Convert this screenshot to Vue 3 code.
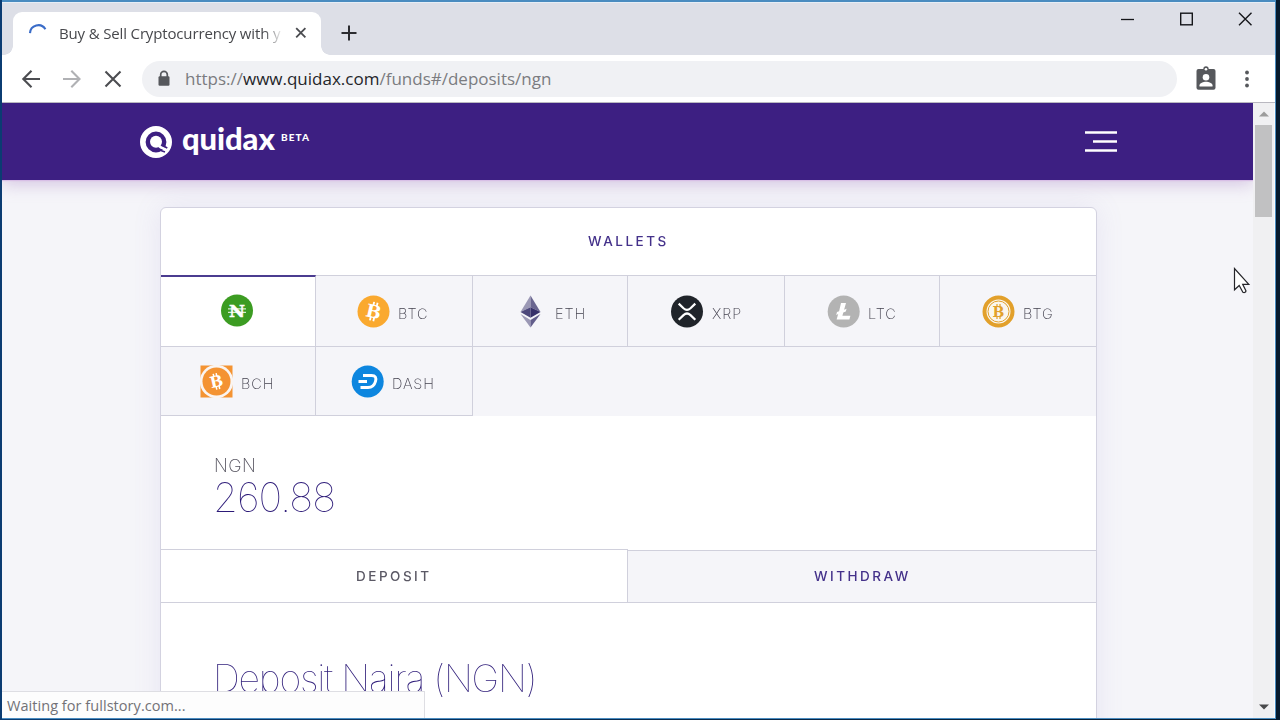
<script setup>
const coins = [
  { id: 'NGN', label: '' },
  { id: 'BTC', label: 'BTC' },
  { id: 'ETH', label: 'ETH' },
  { id: 'XRP', label: 'XRP' },
  { id: 'LTC', label: 'LTC' },
  { id: 'BTG', label: 'BTG' },
  { id: 'BCH', label: 'BCH' },
  { id: 'DASH', label: 'DASH' },
]
</script>

<template>
  <div class="desktop">
    <div class="window">
      <header class="tabstrip">
        <div class="tab">
          <svg class="spinner" width="20" height="20" viewBox="0 0 20 20"><path d="M3 10.100A8.300 8.300 0 0 1 18.400 6.200" fill="none" stroke="#3a6cc8" stroke-width="2.100" /></svg>
          <span class="tab-title">Buy &amp; Sell Cryptocurrency with y</span>
          <svg class="tab-x" width="12" height="12" viewBox="0 0 12 12"><path d="M1.200 1.200l9.200 9.200M10.400 1.200l-9.200 9.200" stroke="#4b4c50" stroke-width="1.800" /></svg>
        </div>
        <svg class="plus" width="16" height="16" viewBox="0 0 16 16"><path d="M8 .5v15M.5 8h15" stroke="#2b2c30" stroke-width="2" /></svg>
        <svg class="controls" width="134" height="16" viewBox="0 0 134 16">
          <path d="M1 9.500h13" stroke="#15161a" stroke-width="1.300" />
          <rect x="60.700" y="3.200" width="11.600" height="11.600" fill="none" stroke="#15161a" stroke-width="1.400" />
          <path d="M119 2.800l12.500 12.500M131.500 2.800L119 15.300" stroke="#15161a" stroke-width="1.400" />
        </svg>
      </header>

      <div class="toolbar">
        <svg class="nav" width="104" height="20" viewBox="0 0 104 20" fill="none" stroke-width="2.100">
          <path d="M19 10H2.500M10.500 1.800L2.300 10l8.200 8.200" stroke="#4c4d51" />
          <path d="M42 10h16.500M50.300 1.800l8.200 8.200-8.200 8.200" stroke="#b0b1b4" />
          <path d="M84.500 2.500l15 15M99.500 2.500l-15 15" stroke="#4c4d51" />
        </svg>
        <div class="address">
          <svg width="14" height="18" viewBox="0 0 14 18"><path d="M3.700 7V4.600a3.300 3.300 0 0 1 6.600 0V7" fill="none" stroke="#56585c" stroke-width="1.700" /><rect x="1.500" y="6.300" width="11" height="9.500" rx="1.200" fill="#56585c" /></svg>
          <span class="url">https://<b>www.quidax.com</b>/funds#/deposits/ngn</span>
        </div>
        <svg class="profile" width="20" height="26" viewBox="0 0 20 26">
          <rect x=".5" y="3" width="19" height="20.800" rx="2" fill="#56585c" />
          <circle cx="10" cy="3" r="2.700" fill="#56585c" /><circle cx="10" cy="3.200" r="1.300" fill="#fff" />
          <circle cx="10" cy="11.300" r="3.300" fill="#fff" /><path d="M3.500 20.500v-1.200c0-2.400 4-3.600 6.500-3.600s6.500 1.200 6.500 3.600v1.200z" fill="#fff" />
        </svg>
        <svg class="dots" width="6" height="20" viewBox="0 0 6 20" fill="#56585c"><circle cx="3" cy="3.500" r="1.900" /><circle cx="3" cy="10" r="1.900" /><circle cx="3" cy="16.500" r="1.900" /></svg>
      </div>

      <div class="viewport">
        <main class="page">
          <nav class="navbar">
            <svg class="mark" width="34" height="34" viewBox="0 0 34 34">
              <circle cx="17" cy="17" r="13.200" fill="none" stroke="#fff" stroke-width="5.600" />
              <circle cx="17" cy="16.800" r="6" fill="#fff" />
              <path d="M19.500 20.500l2.700 2.100M21.500 22.300l6.500 2.500" fill="none" stroke="#fff" stroke-width="2.600" />
              <path d="M20.500 25l5.500 2M23.800 20.700l4.500 2.300" stroke="#3d1f82" stroke-width="1.600" />
            </svg>
            <span class="brand">quidax</span><sup class="beta">BETA</sup>
            <svg class="burger" width="32" height="22" viewBox="0 0 32 22"><path d="M0 1.500h32M8 10.500h24M0 19.500h32" stroke="#fff" stroke-width="2.300" /></svg>
          </nav>

          <section class="card">
            <h2 class="card-head"><span>WALLETS</span></h2>
            <div class="coins">
              <div v-for="(c, i) in coins" :key="c.id" class="coin" :class="{ active: i === 0, lower: i > 5 }">
                <svg width="33" height="33" viewBox="0 0 33 33">
                  <g v-if="c.id === 'NGN'">
                    <circle cx="16" cy="16.500" r="16" fill="#3c9c22" />
                    <path d="M7 14.900h18M7 18.300h18" stroke="#fff" stroke-width="1" />
                    <text x="16" y="23" class="glyph naira" font-size="17.500">N</text>
                  </g>
                  <g v-else-if="c.id === 'BTC'">
                    <circle cx="16.500" cy="16.500" r="16" fill="#faa92f" />
                    <g transform="rotate(13 16.500 16.500)"><text x="16.700" y="22.800" class="glyph" font-size="18">B</text><path d="M15 7v4M18.500 7v4M15 22v4M18.500 22v4" stroke="#fff" stroke-width="1.800" /></g>
                  </g>
                  <g v-else-if="c.id === 'ETH'">
                    <path d="M16.500 .5L6.500 17l10-4.700z" fill="#9b98b5" /><path d="M16.500 .5l10 16.500-10-4.700z" fill="#6a6690" />
                    <path d="M6.500 17l10-4.700v10.500z" fill="#4c477b" /><path d="M26.500 17l-10-4.700v10.500z" fill="#37316a" />
                    <path d="M6.500 19l10 6v7.500z" fill="#9b98b5" /><path d="M26.500 19l-10 6v7.500z" fill="#625d8b" />
                  </g>
                  <g v-else-if="c.id === 'XRP'">
                    <circle cx="16" cy="16.500" r="16" fill="#20242a" />
                    <path d="M7.700 8.600l4.800 4.700q3.500 3.200 7 0l4.800-4.700M7.700 24.800l4.800-4.700q3.500-3.200 7 0l4.800 4.700" fill="none" stroke="#fff" stroke-width="2.200" />
                  </g>
                  <g v-else-if="c.id === 'LTC'">
                    <circle cx="16.700" cy="16.500" r="16" fill="#b3b3b3" />
                    <path d="M14 8h5l-1.900 6.700 2.500-1-.8 2.800-2.500 1-.9 3.200h8l-1 3.700H9.600l1.600-5.300-2 .8.800-2.900 2.100-.8z" fill="#fff" />
                  </g>
                  <g v-else-if="c.id === 'BTG'">
                    <circle cx="16.500" cy="16.500" r="14" fill="#faf6ee" stroke="#e2a02b" stroke-width="4" />
                    <circle cx="16.500" cy="16.500" r="10.500" fill="none" stroke="#e2a02b" stroke-width="1" />
                    <text x="16.500" y="21.600" class="glyph gold" font-size="14">B</text>
                    <path d="M15 9v3M18 9v3M15 21v3M18 21v3" stroke="#e2a02b" stroke-width="1.200" />
                  </g>
                  <g v-else-if="c.id === 'BCH'">
                    <rect x=".5" y=".5" width="32" height="32" fill="#f49332" /><circle cx="16.500" cy="16.500" r="16.700" fill="#faf5f2" /><circle cx="16.500" cy="16.500" r="14" fill="#f49332" />
                    <g transform="rotate(-13 16.500 16.500)"><text x="16.500" y="22" class="glyph" font-size="15.500">B</text><path d="M15 8.300v3M18 8.300v3M15 21.500v3M18 21.500v3" stroke="#fff" stroke-width="1.500" /></g>
                  </g>
                  <g v-else>
                    <circle cx="16.700" cy="16.500" r="16" fill="#0d86df" />
                    <path d="M12 10.500h8.500c4 0 5 2.200 4 5.900s-3.500 6.100-7.500 6.100H9.500M7.500 16.500h8.500" fill="none" stroke="#fff" stroke-width="2.900" />
                  </g>
                </svg>
                <span v-if="c.label" class="coin-label">{{ c.label }}</span>
              </div>
            </div>
            <div class="balance">
              <span class="ccy">NGN</span>
              <span class="amount">260.88</span>
            </div>
            <div class="actions">
              <div class="action on"><span>DEPOSIT</span></div>
              <div class="action off"><span>WITHDRAW</span></div>
            </div>
            <h1 class="title">Deposit Naira (NGN)</h1>
          </section>
        </main>
        <aside class="scroll">
          <svg width="10" height="6" viewBox="0 0 10 6"><path d="M0 5.500L5 .5l5 5z" fill="#9c9c9c" /></svg>
          <div class="thumb"></div>
          <svg class="down" width="10" height="6" viewBox="0 0 10 6"><path d="M0 .5h10l-5 5z" fill="#48494b" /></svg>
        </aside>
      </div>
      <div class="status"><span>Waiting for fullstory.com...</span></div>
    </div>
    <svg class="cursor" width="18" height="28" viewBox="0 0 18 28"><path d="M1.500 1.500v21.300l4.700-4.300 3.700 6.700c1.500.8 3.200 0 3-1.600l-3.200-6.200h6.100z" fill="#fff" stroke="#25252a" stroke-width="1.200" /></svg>
  </div>
</template>

<style>
html, body { margin: 0; overflow: hidden; }
</style>

<style scoped>
* { box-sizing: border-box; }
.desktop { position: relative; width: 1280px; height: 720px; overflow: hidden; background: linear-gradient(90deg, #0b3c72 0 10px, #061a2d 1270px); font-family: Inter, "Liberation Sans", sans-serif; }
.window { position: relative; display: flex; flex-direction: column; margin-left: 2px; width: 1274px; height: 719px; border: solid #4a8cc0; border-width: 2px 1px 1px 0; background: #fff; overflow: hidden; }
.tabstrip { display: flex; flex: none; height: 53px; padding-left: 11px; background: #dddfe7; border-top: 1px solid #e6eef6; }
.tab { position: relative; display: flex; align-items: center; width: 308px; height: 43px; margin-top: 9px; padding: 0 0 2px 14px; background: #fff; border-radius: 9px 9px 0 0; }
.tab::before, .tab::after { content: ""; position: absolute; bottom: 0; width: 9px; height: 9px; }
.tab::before { left: -9px; background: radial-gradient(circle at 0 0, transparent 8.5px, #fff 9px); }
.tab::after { right: -9px; background: radial-gradient(circle at 100% 0, transparent 8.5px, #fff 9px); }
.tab-title { width: 224px; margin-left: 12px; overflow: hidden; white-space: nowrap; font: 15px/22px "Open Sans", sans-serif; letter-spacing: -.15px; color: #47484c; mask-image: linear-gradient(90deg, #000 205px, transparent 224px); }
.tab-x { margin: 1px 0 0 12px; }
.plus { margin: 22px 0 0 20px; }
.controls { margin: 7px 21px 0 auto; }
.toolbar { display: flex; flex: none; align-items: center; height: 48px; padding: 0 25px 0 19px; border-bottom: 1px solid #b9b8c0; }
.address { display: flex; align-items: center; flex: none; width: 1035px; height: 36px; margin-left: 17px; padding-left: 15px; border-radius: 18px; background: #f0f1f4; }
.url { margin-left: 14px; font: 17px/24px "Open Sans", sans-serif; color: #7b7c80; white-space: nowrap; }
.url b { font-weight: 400; color: #242529; }
.profile { margin-left: 18.500px; }
.dots { margin-left: auto; }
.viewport { display: flex; flex: 1; min-height: 0; }
.page { width: 1251px; overflow: hidden; background: #f5f5f9; }
.navbar { position: relative; display: flex; align-items: center; height: 77px; padding: 0 136px 0 137px; background: #3d1f82; box-shadow: 0 1px 1px #d8bfe6, 0 4px 16px #9f79bd66; }
.brand { width: 94px; margin: -8px 0 0 9px; font: 900 31px/40px Lato, sans-serif; letter-spacing: -.1px; color: #fff; }
.beta { margin: -10px 0 0 5px; font: 900 10px/12px Lato, sans-serif; letter-spacing: 1.100px; color: #fff; }
.burger { margin-left: auto; }
.card { width: 937px; height: 560px; margin: 27px 0 0 158px; border: 1px solid #d3d2e0; border-radius: 6px 6px 0 0; background: #fff; box-shadow: 0 0 28px #8479c420; }
.card-head { display: flex; align-items: center; justify-content: center; height: 67px; margin: 0; padding-bottom: 1px; font: 500 13.500px/20px Inter, sans-serif; letter-spacing: 2.500px; color: #44318a; }
.coins { display: grid; grid-template-columns: 155px 157px 155px 157px 155px 156px; grid-template-rows: 71px 70px; background: #f5f5f9; }
.coin { display: flex; align-items: center; justify-content: center; gap: 8px; border: solid #d0d0dc; border-width: 1px 1px 0 0; }
.coin:nth-child(6) { border-right: 0; }
.coin:nth-child(n+3):nth-child(-n+6) { height: 72px; padding-top: 1px; border-bottom: 1px solid #d0d0dc; }
.coin:nth-child(2) { padding: 1px 2px 0 0; }
.coin.lower { border-bottom-width: 1px; padding: 1px 2px 0 0; }
.coin.active { background: #fff; border-top: 2px solid #4b3c90; padding-right: 2px; padding-bottom: 3px; }
.coin-label { margin-top: 4px; font-weight: 200; font-size: 14.500px; letter-spacing: .9px; color: #44424f; }
.glyph { font-family: "DejaVu Serif", serif; font-weight: 700; fill: #fff; text-anchor: middle; }
.glyph.gold { fill: #e2a02b; }
.naira { stroke: #fff; stroke-width: .5px; }
.balance { display: flex; flex-direction: column; height: 133px; padding: 39px 0 0 53px; }
.ccy { font-size: 18px; line-height: 21px; font-weight: 200; letter-spacing: .5px; color: #55535f; }
.amount { margin-left: -1px; font-size: 40px; line-height: 44px; font-weight: 100; letter-spacing: -.9px; color: #2c1a78; }
.actions { display: grid; grid-template-columns: 467px 468px; height: 54px; border-bottom: 1px solid #d0d0dc; }
.action { display: flex; align-items: center; justify-content: center; border-top: 1px solid #d0d0dc; font-weight: 500; font-size: 13.500px; letter-spacing: 2.500px; color: #5b5965; }
.action.on { border-right: 1px solid #d0d0dc; }
.action.off { margin-top: 1px; padding-bottom: 1px; background: #f5f5f9; color: #44318a; }
.title { margin: 53px 0 0 52px; font-size: 37.500px; line-height: 46px; font-weight: 100; letter-spacing: -1.200px; color: #2c1a78; white-space: nowrap; }
.ccy, .amount, .title, .coin-label, .card-head span, .action span { will-change: transform; }
.scroll { display: flex; flex: 1; flex-direction: column; align-items: center; padding: 8px 0; background: #f0f0f2; border-right: 1px solid #fafafa; }
.thumb { width: 17px; height: 92px; margin-top: 8px; background: #c1c1c2; }
.down { margin-top: auto; }
.status { position: absolute; z-index: 2; left: 0; bottom: 0; width: 423px; height: 27px; padding-left: 5px; border: solid #dedee3; border-width: 1px 1px 0 0; background: #fdfdfd; font: 14.500px/27px "Open Sans", sans-serif; letter-spacing: .05px; color: #727277; }
.cursor { position: absolute; z-index: 3; left: 1233px; top: 267px; }
</style>
